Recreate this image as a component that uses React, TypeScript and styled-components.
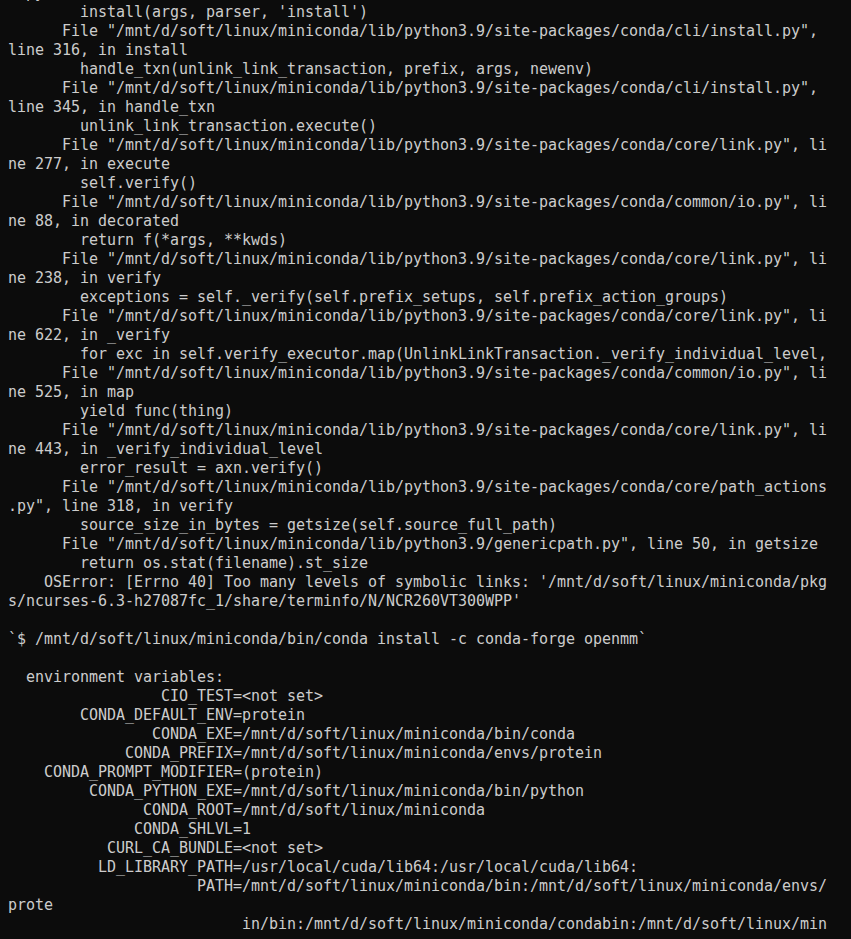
import React from "react";
import styled, { createGlobalStyle } from "styled-components";

const GlobalStyle = createGlobalStyle`
  html, body {
    margin: 0;
    padding: 0;
    background: #0c0c0c;
  }
`;

const Screen = styled.div`
  width: 851px;
  height: 939px;
  overflow: hidden;
  background: #0c0c0c;
  padding-left: 8px;
  box-sizing: border-box;
`;

const Output = styled.div`
  margin-top: -16px;
  display: flex;
  flex-direction: column;
`;

const Row = styled.div`
  height: 19px;
  line-height: 19px;
  white-space: pre;
  font-family: "DejaVu Sans Mono", "Liberation Mono", monospace;
  font-size: 15px;
  letter-spacing: -0.03px;
  color: #cccccc;
`;

const site = '/mnt/d/soft/linux/miniconda/lib/python3.9/site-packages/conda';

// rows exactly as the terminal wrapped them (91 columns)
const rows: string[] = [
  'l.py", line 20, in execute',
  "        install(args, parser, 'install')",
  `      File "${site}/cli/install.py",`,
  "line 316, in install",
  "        handle_txn(unlink_link_transaction, prefix, args, newenv)",
  `      File "${site}/cli/install.py",`,
  "line 345, in handle_txn",
  "        unlink_link_transaction.execute()",
  `      File "${site}/core/link.py", li`,
  "ne 277, in execute",
  "        self.verify()",
  `      File "${site}/common/io.py", li`,
  "ne 88, in decorated",
  "        return f(*args, **kwds)",
  `      File "${site}/core/link.py", li`,
  "ne 238, in verify",
  "        exceptions = self._verify(self.prefix_setups, self.prefix_action_groups)",
  `      File "${site}/core/link.py", li`,
  "ne 622, in _verify",
  "        for exc in self.verify_executor.map(UnlinkLinkTransaction._verify_individual_level,",
  `      File "${site}/common/io.py", li`,
  "ne 525, in map",
  "        yield func(thing)",
  `      File "${site}/core/link.py", li`,
  "ne 443, in _verify_individual_level",
  "        error_result = axn.verify()",
  `      File "${site}/core/path_actions`,
  '.py", line 318, in verify',
  "        source_size_in_bytes = getsize(self.source_full_path)",
  '      File "/mnt/d/soft/linux/miniconda/lib/python3.9/genericpath.py", line 50, in getsize',
  "        return os.stat(filename).st_size",
  "    OSError: [Errno 40] Too many levels of symbolic links: '/mnt/d/soft/linux/miniconda/pkg",
  "s/ncurses-6.3-h27087fc_1/share/terminfo/N/NCR260VT300WPP'",
  "",
  "`$ /mnt/d/soft/linux/miniconda/bin/conda install -c conda-forge openmm`",
  "",
  "  environment variables:",
  "                 CIO_TEST=<not set>",
  "        CONDA_DEFAULT_ENV=protein",
  "                CONDA_EXE=/mnt/d/soft/linux/miniconda/bin/conda",
  "             CONDA_PREFIX=/mnt/d/soft/linux/miniconda/envs/protein",
  "    CONDA_PROMPT_MODIFIER=(protein)",
  "         CONDA_PYTHON_EXE=/mnt/d/soft/linux/miniconda/bin/python",
  "               CONDA_ROOT=/mnt/d/soft/linux/miniconda",
  "              CONDA_SHLVL=1",
  "           CURL_CA_BUNDLE=<not set>",
  "          LD_LIBRARY_PATH=/usr/local/cuda/lib64:/usr/local/cuda/lib64:",
  "                     PATH=/mnt/d/soft/linux/miniconda/bin:/mnt/d/soft/linux/miniconda/envs/",
  "prote",
  "                          in/bin:/mnt/d/soft/linux/miniconda/condabin:/mnt/d/soft/linux/min",
];

export default function App() {
  return (
    <>
      <GlobalStyle />
      <Screen>
        <Output>
          {rows.map((text, i) => (
            <Row key={i}>{text || " "}</Row>
          ))}
        </Output>
      </Screen>
    </>
  );
}
